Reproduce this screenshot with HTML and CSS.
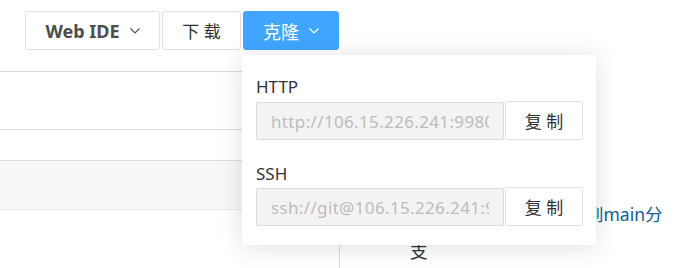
FILE: index.html
```html
<!DOCTYPE html>
<html lang="zh-CN">
<head>
    <meta charset="UTF-8">
    <meta name="viewport" content="width=device-width, initial-scale=1.0">
    <title>仓库</title>
    <link rel="stylesheet" href="styles.css">
</head>
<body>
    <div class="toolbar">
        <button class="btn btn-bold">Web IDE
            <svg class="caret" width="10" height="6" viewBox="0 0 10 6"><polyline points="0.5,0.5 5,5 9.5,0.5" fill="none" stroke="currentColor" stroke-width="1.2"/></svg>
        </button>
        <button class="btn btn-download">下 载</button>
        <button class="btn btn-primary">克隆
            <svg class="caret" width="10" height="6" viewBox="0 0 10 6"><polyline points="0.5,0.5 5,5 9.5,0.5" fill="none" stroke="currentColor" stroke-width="1.2"/></svg>
        </button>
    </div>

    <div class="content">
        <div class="file-list">
            <div class="row row-tall"></div>
            <div class="row row-short"></div>
            <div class="row row-gray"></div>
        </div>
        <div class="commit-panel">
            <p class="commit-msg">到main分<br><span class="commit-tail">支</span></p>
        </div>
    </div>

    <!-- clone popover -->
    <div class="popover">
        <div class="clone-label">HTTP</div>
        <div class="clone-row">
            <input class="clone-input" type="text" value="http://106.15.226.241:9980/root/demo.git" disabled>
            <button class="btn btn-copy">复 制</button>
        </div>
        <div class="clone-label clone-label-ssh">SSH</div>
        <div class="clone-row">
            <input class="clone-input" type="text" value="ssh://git@106.15.226.241:9922/root/demo.git" disabled>
            <button class="btn btn-copy">复 制</button>
        </div>
    </div>
</body>
</html>
```

FILE: styles.css
```css
body {
    font-family: "Noto Sans", "Noto Sans CJK SC", sans-serif;
    margin: 0;
    padding: 0;
    color: #303133;
    background-color: #fff;
    width: 675px;
    height: 268px;
    overflow: hidden;
    position: relative;
}
.toolbar {
    display: flex;
    gap: 2px;
    padding: 11px 0 0 25px;
    height: 39px;
}
.btn {
    font-family: inherit;
    font-size: 17px;
    height: 39px;
    border: 1px solid #dcdfe6;
    border-radius: 3px;
    background-color: #fff;
    color: #303133;
    display: flex;
    align-items: center;
    justify-content: center;
    gap: 10px;
    padding: 0;
    cursor: pointer;
}
.btn-bold {
    width: 135px;
    font-size: 18px;
    font-weight: bold;
    color: #4d4d4d;
}
.btn-download {
    width: 79px;
}
.btn-primary {
    width: 96px;
    font-size: 18px;
    background-color: #40a6ff;
    border-color: #40a6ff;
    color: #fff;
}
.caret {
    margin-top: 1px;
}
.btn-bold .caret {
    color: #555;
}
.content {
    display: flex;
    margin-top: 21px;
}
.file-list {
    width: 339px;
    flex-shrink: 0;
    border-top: 1px solid #dcdcdc;
}
.row {
    border-bottom: 1px solid #dcdcdc;
}
.row-tall {
    height: 57px;
}
.row-short {
    height: 30px;
}
.row-gray {
    height: 48px;
    background-color: #f8f8f8;
    border-bottom-color: #ebebeb;
}
.commit-panel {
    flex: 1;
    border-left: 1px solid #dcdcdc;
    padding-top: 125px;
}
.commit-msg {
    margin: 0;
    padding-left: 70px;
    text-indent: 176px;
    font-size: 17.5px;
    line-height: 37px;
    color: #0f5f8f;
    white-space: nowrap;
}
.commit-tail {
    color: #303133;
}
.popover {
    position: absolute;
    left: 242px;
    top: 55px;
    width: 327px;
    padding: 20px 13px 19px 14px;
    background-color: #fff;
    border-radius: 3px;
    box-shadow: 0 2px 26px rgba(0, 0, 0, 0.13);
}
.clone-label {
    font-size: 17px;
    line-height: 24px;
    color: #303133;
    margin-bottom: 3px;
}
.clone-label-ssh {
    margin-top: 22px;
    margin-bottom: 2px;
}
.clone-row {
    display: flex;
    gap: 1px;
}
.clone-input {
    width: 248px;
    height: 38px;
    box-sizing: border-box;
    border: 1px solid #dadada;
    border-radius: 2px;
    background-color: #f3f3f3;
    color: #bcbcbc;
    font-family: inherit;
    font-size: 17px;
    letter-spacing: 0.35px;
    padding: 0 14px;
}
.btn-copy {
    width: 78px;
    height: 39px;
    margin-top: -1px;
}
```
